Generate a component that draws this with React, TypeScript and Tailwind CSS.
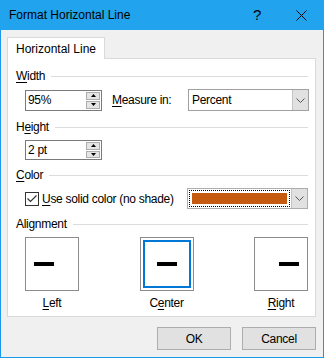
import React from "react"

const font = { fontFamily: '"Liberation Sans", Arial, sans-serif' }

function Chevron() {
  return (
    <svg width="9" height="5" viewBox="0 0 9 5" className="block">
      <path d="M0.5 0.5 L4.5 4.5 L8.5 0.5" fill="none" stroke="#555" strokeWidth="1" />
    </svg>
  )
}

function GroupLabel({ children }: { children: React.ReactNode }) {
  return (
    <div className="flex h-4 items-center gap-[6px] pr-[7px]">
      <span className="text-[12px] leading-4 text-black">{children}</span>
      <div className="h-px flex-1 bg-[#dcdcdc]" />
    </div>
  )
}

function Spinner({ value, h }: { value: string; h: string }) {
  return (
    <div className={`flex w-[77px] ${h} border border-[#7a7a7a] bg-white`}>
      <div className="flex flex-1 items-center pl-[2px] text-[12px] text-black">{value}</div>
      <div className="flex w-[16px] flex-col gap-px p-px">
        <div className="flex flex-1 items-center justify-center border border-[#adadad] bg-[#e5e5e5]">
          <svg width="5" height="3" viewBox="0 0 5 3"><path d="M0 3 L2.5 0 L5 3 Z" fill="#000" /></svg>
        </div>
        <div className="flex flex-1 items-center justify-center border border-[#adadad] bg-[#e5e5e5]">
          <svg width="5" height="3" viewBox="0 0 5 3"><path d="M0 0 L2.5 3 L5 0 Z" fill="#000" /></svg>
        </div>
      </div>
    </div>
  )
}

function AlignBox({ pos, selected }: { pos: "left" | "center" | "right"; selected?: boolean }) {
  const justify = pos === "left" ? "justify-start pl-[8px]" : pos === "right" ? "justify-end pr-[8px]" : "justify-center"
  if (selected) {
    return (
      <div className="h-[54px] w-[54px] border border-[#8c8c8c] p-[2px]">
        <div className="flex h-full w-full items-center justify-center border-2 border-[#0078d7] bg-white">
          <div className="h-[4px] w-[20px] bg-black" />
        </div>
      </div>
    )
  }
  return (
    <div className={`flex h-[54px] w-[54px] items-center border border-[#8c8c8c] bg-white ${justify}`}>
      <div className="h-[4px] w-[20px] bg-black" />
    </div>
  )
}

export default function App() {
  return (
    <div style={font} className="flex h-[358px] w-[324px] flex-col border-x border-b border-[#1a98eb] bg-[#f0f0f0] tracking-[-0.3px] text-black">
      <div className="-mx-px flex h-[30px] items-center bg-[#22a3ed] pl-[9px]">
        <span className="flex-1 text-[12px] tracking-normal text-black">Format Horizontal Line</span>
        <span className="w-[43px] text-[15px] text-black">?</span>
        <svg width="11" height="11" viewBox="0 0 11 11" className="mr-[17px]">
          <path d="M0.5 0.5 L10.5 10.5 M10.5 0.5 L0.5 10.5" stroke="#000" strokeWidth="1" />
        </svg>
      </div>

      <div className="mt-[7px] flex flex-col pl-[6px] pr-[7px]">
        <div className="relative z-10 -mb-px flex h-[22px] w-[98px] items-center border border-b-0 border-[#d9d9d9] bg-white pl-[8px] text-[12px] tracking-normal">
          Horizontal Line
        </div>
        <div className="flex h-[259px] flex-col border border-[#d9d9d9] bg-white pl-[8px] pt-[9px]">
          <GroupLabel><u className="underline-offset-2">W</u>idth</GroupLabel>
          <div className="mt-[5px] flex items-center pl-[9px]">
            <Spinner value="95%" h="h-[21px]" />
            <span className="ml-[10px] w-[76px] text-[12px]"><u className="underline-offset-2">M</u>easure in:</span>
            <div className="flex h-[22px] w-[121px] border border-[#a0a0a0] bg-white">
              <div className="flex flex-1 items-center pl-[3px] text-[12px]">Percent</div>
              <div className="flex w-[16px] items-center justify-center border-l border-[#c4c4c4] bg-[#e1e1e1]">
                <Chevron />
              </div>
            </div>
          </div>

          <div className="mt-[8px]">
            <GroupLabel>H<u className="underline-offset-2">e</u>ight</GroupLabel>
          </div>
          <div className="mt-[5px] flex pl-[9px]">
            <Spinner value="2 pt" h="h-[20px]" />
          </div>

          <div className="mt-[7px]">
            <GroupLabel><u className="underline-offset-2">C</u>olor</GroupLabel>
          </div>
          <div className="mt-[5px] flex items-center pl-[9px]">
            <div className="flex h-[14px] w-[14px] items-center justify-center border border-[#333] bg-white">
              <svg width="10" height="8" viewBox="0 0 10 8">
                <path d="M0.5 3.5 L3.5 6.5 L9.5 0.5" fill="none" stroke="#333" strokeWidth="1.2" />
              </svg>
            </div>
            <span className="ml-[3px] w-[145px] text-[12px]"><u className="underline-offset-2">U</u>se solid color (no shade)</span>
            <div className="flex h-[21px] w-[121px] border border-[#adadad] bg-white">
              <div className="flex flex-1 p-px">
                <div className="flex flex-1 border border-dotted border-black p-[2px]">
                  <div className="flex-1 bg-[#c55a11]" />
                </div>
              </div>
              <div className="flex w-[16px] items-center justify-center border-l border-[#c4c4c4] bg-[#e1e1e1]">
                <Chevron />
              </div>
            </div>
          </div>

          <div className="mt-[7px]">
            <GroupLabel>Alignment</GroupLabel>
          </div>
          <div className="mt-[5px] flex justify-between pl-[9px] pr-[7px]">
            <div className="flex flex-col items-center">
              <AlignBox pos="left" />
              <span className="mt-[3px] text-[12px]"><u className="underline-offset-2">L</u>eft</span>
            </div>
            <div className="flex flex-col items-center">
              <AlignBox pos="center" selected />
              <span className="mt-[3px] text-[12px]">C<u className="underline-offset-2">e</u>nter</span>
            </div>
            <div className="flex flex-col items-center">
              <AlignBox pos="right" />
              <span className="mt-[3px] text-[12px]"><u className="underline-offset-2">R</u>ight</span>
            </div>
          </div>
        </div>
      </div>

      <div className="mt-[10px] flex justify-end gap-[11px] pr-[7px]">
        <button className="h-[23px] w-[74px] border border-[#adadad] bg-[#e1e1e1] text-[12px]">OK</button>
        <button className="h-[23px] w-[74px] border border-[#adadad] bg-[#e1e1e1] text-[12px]">Cancel</button>
      </div>
    </div>
  )
}
